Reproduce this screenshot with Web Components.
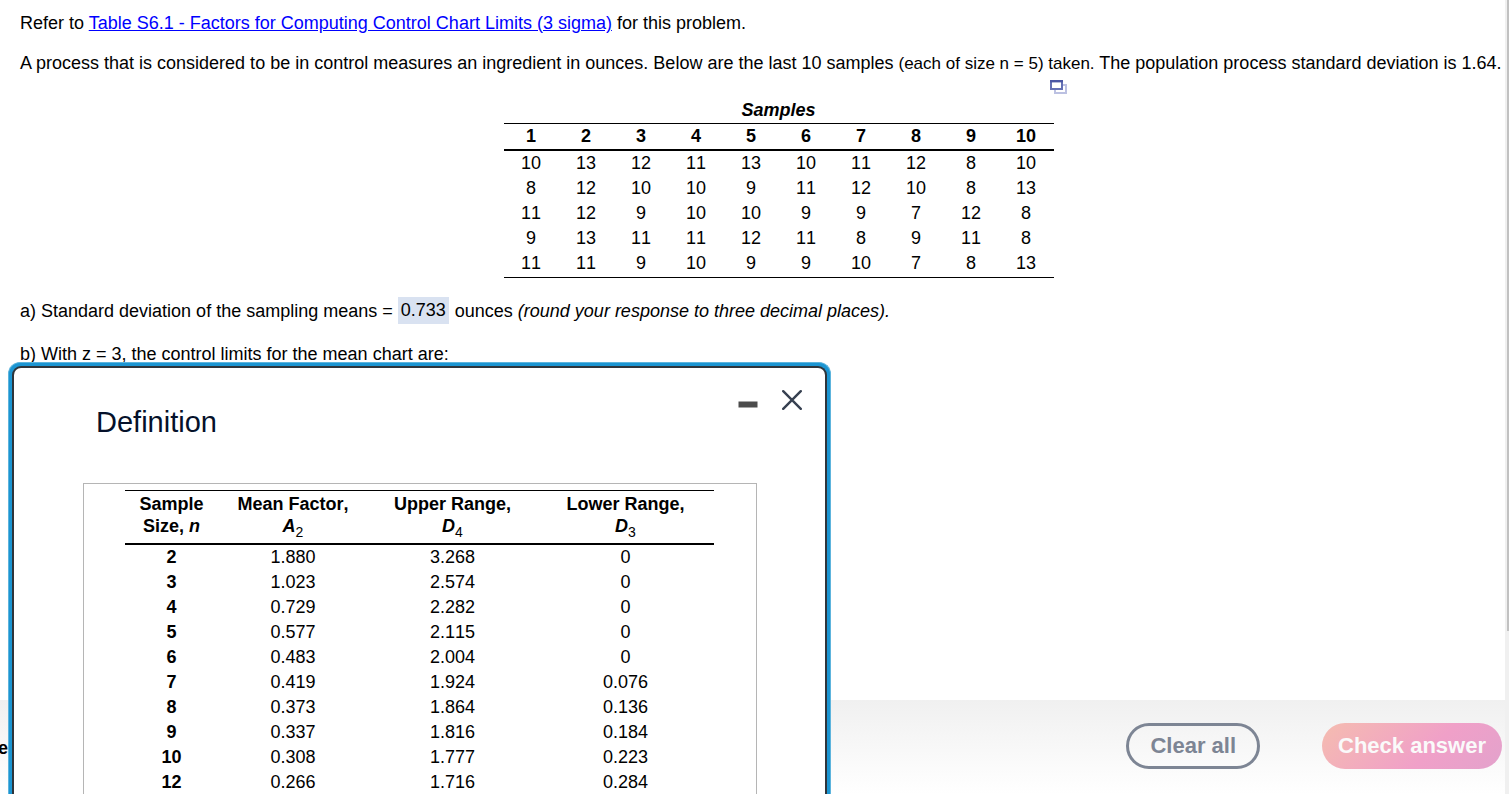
<!DOCTYPE html>
<html lang="en">
<head>
<meta charset="utf-8">
<title>Control chart exercise</title>
<style>
  html, body { margin: 0; height: 100%; overflow: hidden; }
  body { background: #fff; color: #000; font: 18px/24px "Liberation Sans", Arial, sans-serif; }
</style>
</head>
<body>
<exercise-shell>
  <exercise-question slot="question"></exercise-question>
  <definition-dialog slot="dialog" heading="Definition"><factors-table></factors-table></definition-dialog>
  <action-bar slot="actions">
    <pill-button kind="outline">Clear all</pill-button>
    <pill-button kind="filled">Check answer</pill-button>
  </action-bar>
</exercise-shell>

<script>
const attach = (el, html) => { el.attachShadow({ mode: "open" }).innerHTML = html; };

class ExerciseShell extends HTMLElement {
  constructor() {
    super();
    attach(this, `
      <style>
        :host { position: relative; display: grid; grid-template-columns: minmax(0, 1fr) 4px; height: 100vh; overflow: hidden; }
        .page { display: flex; flex-direction: column; min-height: 0; }
        main { flex: 1; min-height: 0; }
        .track { display: flex; justify-content: flex-end; background: #f0f0f0; }
        .thumb { width: 2px; height: 79.5%; background: #c1c1c1; }
      </style>
      <div class="page">
        <main><slot name="question"></slot></main>
        <slot name="actions"></slot>
      </div>
      <div class="track"><div class="thumb"></div></div>
      <slot name="dialog"></slot>`);
  }
}

class ExerciseQuestion extends HTMLElement {
  constructor() {
    super();
    attach(this, `
      <style>
        :host { display: block; padding: 11px 0 0 20px; }
        p { margin: 0; white-space: nowrap; }
        .intro { margin-bottom: 16px; }
        .aside { font-size: 17px; line-height: 0; }
        a { color: #00f; }
        .data { display: flex; justify-content: center; padding: 24px 0 19px 32px; }
        .answer { display: flex; align-items: center; margin-bottom: 18px; }
        output { margin: 0 6px 0 5px; padding: 0 3px; line-height: 27px; background: #d9e2f1; }
        em { margin-left: 5px; }
      </style>
      <p class="intro">Refer to <a href="#table-s6-1">Table S6.1 - Factors for Computing Control Chart Limits (3 sigma)</a> for this problem.</p>
      <p>A process that is considered to be in control measures an ingredient in ounces. Below are the last 10 samples <span class="aside">(each of size n = 5) taken.</span> The population process standard deviation is 1.64.</p>
      <div class="data"><samples-table></samples-table></div>
      <p class="answer"><label for="sd">a) Standard deviation of the sampling means =</label><output id="sd">0.733</output><span>ounces</span><em>(round your response to three decimal places).</em></p>
      <p>b) With z = 3, the control limits for the mean chart are:</p>`);
  }
}

class SamplesTable extends HTMLElement {
  constructor() {
    super();
    const rows = [
      [10, 13, 12, 11, 13, 10, 11, 12, 8, 10],
      [8, 12, 10, 10, 9, 11, 12, 10, 8, 13],
      [11, 12, 9, 10, 10, 9, 9, 7, 12, 8],
      [9, 13, 11, 11, 12, 11, 8, 9, 11, 8],
      [11, 11, 9, 10, 9, 9, 10, 7, 8, 13]
    ];
    attach(this, `
      <style>
        :host { position: relative; display: block; width: 550px; font-kerning: none; }
        table { width: 100%; table-layout: fixed; border-collapse: collapse; text-align: center; }
        caption { padding-bottom: 2px; font-weight: bold; font-style: italic; line-height: 22px; }
        th, td { padding: 0; line-height: 25px; }
        thead tr { border-top: 1px solid #000; border-bottom: 2px solid #000; }
        tbody { border-bottom: 1px solid #000; }
        tbody tr:last-child td { padding-bottom: 1px; }
        button { position: absolute; top: -19px; right: -13px; padding: 0; border: 0; background: none; line-height: 0; }
      </style>
      <table>
        <caption>Samples</caption>
        <thead><tr>${rows[0].map((_, i) => `<th scope="col">${i + 1}</th>`).join("")}</tr></thead>
        <tbody>${rows.map(r => `<tr>${r.map(v => `<td>${v}</td>`).join("")}</tr>`).join("")}</tbody>
      </table>
      <button type="button" aria-label="Open data in a new window">
        <svg width="17" height="14" viewBox="0 0 17 14" fill="none">
          <rect x="5" y="5" width="11" height="8" fill="#fff" stroke="#bcc1e2" stroke-width="2"/>
          <rect x="1" y="1" width="11" height="8" fill="#fff" stroke="#6470b4" stroke-width="2"/>
          <path d="M0 1.2h13" stroke="#4b57a4" stroke-width="2.4"/>
        </svg>
      </button>`);
  }
}

class FactorsTable extends HTMLElement {
  constructor() {
    super();
    const rows = [
      ["2", "1.880", "3.268", "0"], ["3", "1.023", "2.574", "0"], ["4", "0.729", "2.282", "0"],
      ["5", "0.577", "2.115", "0"], ["6", "0.483", "2.004", "0"], ["7", "0.419", "1.924", "0.076"],
      ["8", "0.373", "1.864", "0.136"], ["9", "0.337", "1.816", "0.184"],
      ["10", "0.308", "1.777", "0.223"], ["12", "0.266", "1.716", "0.284"]
    ];
    attach(this, `
      <style>
        :host { display: block; font-kerning: none; }
        table { width: 100%; table-layout: fixed; border-collapse: collapse; text-align: center; }
        .size { width: 93px; } .mean { width: 150px; } .upper { width: 169px; }
        thead tr { border-top: 1px solid #000; border-bottom: 2px solid #000; }
        thead th { padding: 2px 0 6px; line-height: 22px; }
        tbody th, td { padding: 0; line-height: 25px; }
        sub { font-size: 14px; font-weight: normal; font-style: normal; line-height: 0; }
      </style>
      <table>
        <colgroup><col class="size"><col class="mean"><col class="upper"><col></colgroup>
        <thead><tr>
          <th scope="col">Sample<br>Size, <i>n</i></th>
          <th scope="col">Mean Factor,<br><i>A</i><sub>2</sub></th>
          <th scope="col">Upper Range,<br><i>D</i><sub>4</sub></th>
          <th scope="col">Lower Range,<br><i>D</i><sub>3</sub></th>
        </tr></thead>
        <tbody>${rows.map(([n, ...v]) => `<tr><th scope="row">${n}</th>${v.map(x => `<td>${x}</td>`).join("")}</tr>`).join("")}</tbody>
      </table>`);
  }
}

class DefinitionDialog extends HTMLElement {
  constructor() {
    super();
    attach(this, `
      <style>
        :host { position: absolute; left: 8px; top: 362px; bottom: 0; width: 823px; box-sizing: border-box;
          border: 1px solid #5db4dd; border-bottom: 0; border-radius: 12px 12px 0 0; background: #1b95d2; overflow: hidden; }
        .ring { height: 100%; box-sizing: border-box; margin: 0 3px; padding-top: 3px; }
        .window { height: 100%; box-sizing: border-box; border: 2px solid #2e353b; border-bottom: 0; border-radius: 9px 9px 0 0; background: #fff; overflow: hidden; }
        header { display: flex; justify-content: space-between; padding: 20px 23px 0 82px; }
        h2 { margin: 16px 0 0; font-size: 29px; line-height: 36px; font-weight: normal; color: #05112a; }
        .tools { display: flex; gap: 24px; height: 24px; }
        button { display: flex; align-items: center; justify-content: center; width: 20px; height: 24px; padding: 0; border: 0; background: none; }
        .panel { margin: 43px 68px 0 69px; padding: 6px 42px 0 41px; border: 1px solid #b5b5b5; }
      </style>
      <div class="ring"><div class="window" role="dialog" aria-labelledby="title">
        <header>
          <h2 id="title"></h2>
          <div class="tools">
            <button type="button" aria-label="Minimize"><svg width="20" height="24" viewBox="0 0 20 24"><path d="M.5 13.5h19v6h-19z" fill="#4c4c4c"/></svg></button>
            <button type="button" aria-label="Close"><svg width="20" height="24" viewBox="0 0 20 24"><path d="M1.2 3.2l17.6 17.6M18.8 3.2L1.2 20.8" stroke="#374151" stroke-width="2.4" stroke-linecap="round"/></svg></button>
          </div>
        </header>
        <div class="panel"><slot></slot></div>
      </div></div>`);
    this.shadowRoot.querySelector("h2").textContent = this.getAttribute("heading");
  }
}

class ActionBar extends HTMLElement {
  constructor() {
    super();
    attach(this, `
      <style>
        :host { display: flex; align-items: center; justify-content: space-between; box-sizing: border-box; height: 94px; padding: 0 3px 2px 0; background: linear-gradient(#f0f0f0, #fff); }
        .hint { display: flex; justify-content: flex-end; width: 8px; padding-top: 4px; overflow: hidden; font-weight: bold; }
        .buttons { display: flex; gap: 62px; }
      </style>
      <div class="hint">e</div>
      <div class="buttons"><slot></slot></div>`);
  }
}

class PillButton extends HTMLElement {
  constructor() {
    super();
    attach(this, `
      <style>
        :host { display: block; }
        button { display: block; height: 46px; padding: 0 21px; border: 3px solid #7d8594; border-radius: 23px; background: transparent;
          color: #7d8594; font: bold 22px/40px "Liberation Sans", Arial, sans-serif; white-space: nowrap; }
        :host([kind="filled"]) button { padding: 0 16px; border: 0; line-height: 46px; color: #fafafa;
          background: linear-gradient(135deg, #f5bcb0, #f0a0c8 60%, #e3a2cc); }
      </style>
      <button type="button"><slot></slot></button>`);
  }
}

customElements.define("exercise-shell", ExerciseShell);
customElements.define("exercise-question", ExerciseQuestion);
customElements.define("samples-table", SamplesTable);
customElements.define("factors-table", FactorsTable);
customElements.define("definition-dialog", DefinitionDialog);
customElements.define("action-bar", ActionBar);
customElements.define("pill-button", PillButton);
</script>
</body>
</html>
